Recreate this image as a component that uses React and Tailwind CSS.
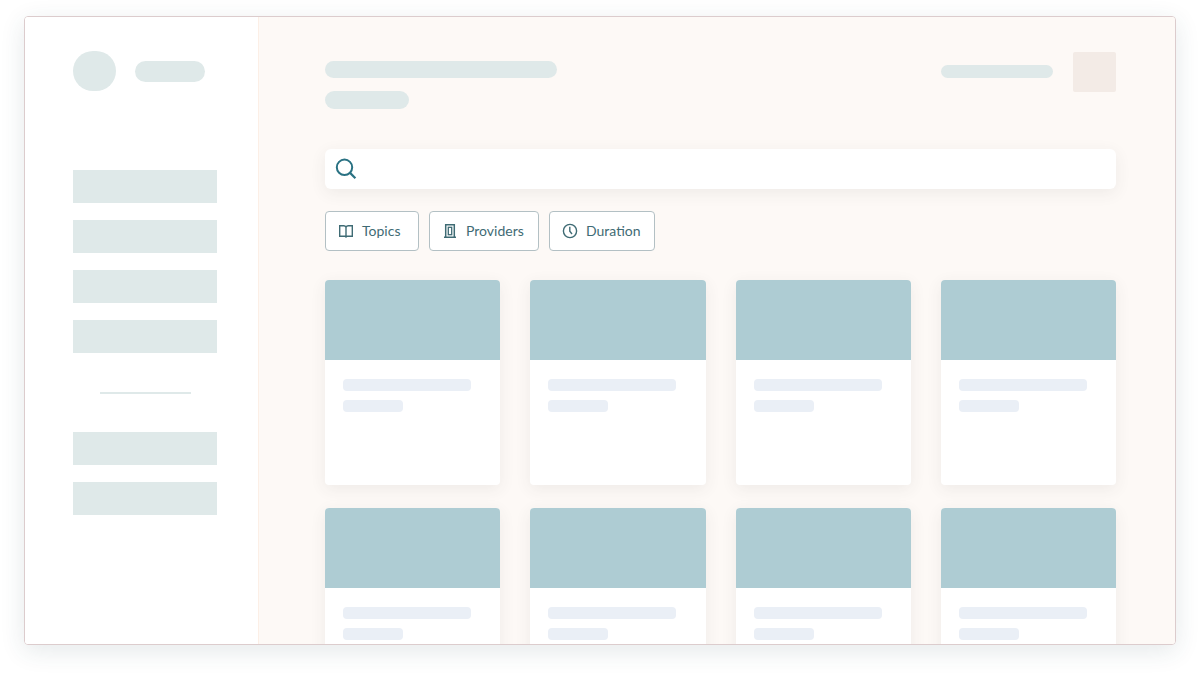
import React from "react";

const BookIcon = () => (
  <svg className="w-4 h-4 shrink-0" viewBox="0 0 16 16" fill="none" stroke="currentColor" strokeWidth="1.4" aria-hidden="true">
    <path d="M8 4.2C7.6 3.2 6.8 2.7 5.8 2.7H1.7v10.6H14.3V2.7h-4.1C9.2 2.7 8.4 3.2 8 4.2v10.6" />
  </svg>
);

const BuildingIcon = () => (
  <svg className="w-4 h-4 shrink-0" viewBox="0 0 16 16" fill="none" stroke="currentColor" aria-hidden="true">
    <path d="M2 14.3h12" strokeWidth="1.4" />
    <path d="M3.7 14V1.7h8.6V14" strokeWidth="1.5" />
    <rect x="6.3" y="4.3" width="3.4" height="7.4" strokeWidth="1.3" />
  </svg>
);

const ClockIcon = () => (
  <svg className="w-4 h-4 shrink-0" viewBox="0 0 16 16" fill="none" stroke="currentColor" strokeWidth="1.4" aria-hidden="true">
    <circle cx="8" cy="8" r="6.6" />
    <path d="M7.8 3.8v4.4l2.2 2.8" />
  </svg>
);

const SearchIcon = () => (
  <svg className="w-6 h-6 shrink-0" viewBox="0 0 24 24" fill="none" stroke="currentColor" aria-hidden="true">
    <circle cx="10.5" cy="10.3" r="7.7" strokeWidth="2" />
    <path d="M15.8 15.6l5.6 5.6" strokeWidth="2.2" />
  </svg>
);

const filters = [
  { label: "Topics", Icon: BookIcon, width: "w-[94px]" },
  { label: "Providers", Icon: BuildingIcon, width: "w-[110px]" },
  { label: "Duration", Icon: ClockIcon, width: "w-[106px]" },
];

function NavBlocks({ count }) {
  return (
    <div className="flex flex-col gap-[17px]">
      {Array.from({ length: count }).map((_, i) => (
        <div key={i} className="h-[33px] bg-[#dfe9e9]" />
      ))}
    </div>
  );
}

function Sidebar() {
  return (
    <aside className="w-[234px] shrink-0 border-r border-[#fcefe6] bg-white pt-[34px] pl-12 pr-[41px]">
      <div className="flex items-center gap-[19px]">
        <div className="w-[43px] h-10 rounded-[20px] bg-[#dfe9e9]" />
        <div className="w-[70px] h-[21px] rounded-full bg-[#dfe9e9]" />
      </div>
      <nav className="mt-[79px]">
        <NavBlocks count={4} />
        <hr className="mt-[39px] mb-[38px] ml-[27px] mr-[26px] h-[2px] border-0 bg-[#dfe9e9]" />
        <NavBlocks count={2} />
      </nav>
    </aside>
  );
}

function Card() {
  return (
    <div className="h-[205px] overflow-hidden rounded bg-white shadow-[0_4px_16px_rgba(60,60,60,0.08)]">
      <div className="h-20 bg-[#aeccd3]" />
      <div className="flex flex-col gap-[9px] px-[18px] pt-[19px]">
        <div className="w-32 h-3 rounded bg-[#eaeff6]" />
        <div className="w-[60px] h-3 rounded bg-[#eaeff6]" />
      </div>
    </div>
  );
}

function App() {
  return (
    <div className="h-screen bg-white px-6 pt-4 pb-8 font-['Lato',sans-serif]">
      <div className="h-full rounded shadow-[0_6px_24px_rgba(40,70,80,0.12)]">
        <div className="flex h-full overflow-hidden rounded border border-[#dccccd]">
          <Sidebar />

          <main className="flex-1 min-w-0 bg-[#fdf9f6] pt-[35px] pl-[66px] pr-[59px]">
            <header className="flex justify-between">
              <div className="flex flex-col gap-[13px] pt-[9px]">
                <div className="w-58 h-[17px] rounded-full bg-[#dfe9e9]" />
                <div className="w-21 h-[18px] rounded-full bg-[#dfe9e9]" />
              </div>
              <div className="flex items-start gap-5">
                <div className="mt-[13px] w-28 h-[13px] rounded-full bg-[#dfe9e9]" />
                <div className="w-[43px] h-10 rounded-xs bg-[#f3ebe6]" />
              </div>
            </header>

            <label className="mt-10 flex h-10 items-center rounded-md bg-white pl-[9px] text-[#2a7283] shadow-[0_4px_16px_rgba(60,60,60,0.08)]">
              <SearchIcon />
              <input type="search" aria-label="Search" className="ml-2 min-w-0 flex-1 bg-transparent text-sm outline-none" />
            </label>

            <div className="mt-[22px] flex gap-[10px]">
              {filters.map(({ label, Icon, width }) => (
                <button
                  key={label}
                  type="button"
                  className={`${width} flex h-10 items-center gap-2 rounded border border-[#b3c0c4] bg-white pl-3 text-sm text-[#3f6b74]`}
                >
                  <Icon />
                  {label}
                </button>
              ))}
            </div>

            {/* Results */}
            <div className="mt-[29px] grid grid-cols-4 gap-x-[30px] gap-y-[23px]">
              {Array.from({ length: 8 }).map((_, i) => (
                <Card key={i} />
              ))}
            </div>
          </main>
        </div>
      </div>
    </div>
  );
}

export default App;
